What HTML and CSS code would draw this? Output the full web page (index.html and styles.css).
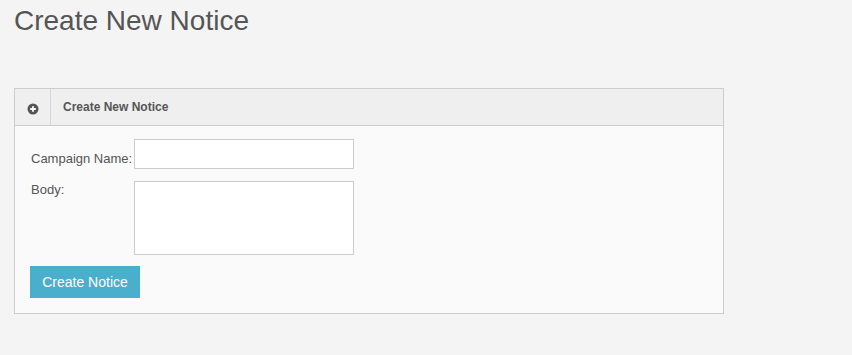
FILE: index.html
```html
<!DOCTYPE html>
<html lang="en">
<head>
  <meta charset="UTF-8" />
  <title>Create New Notice</title>
  <link rel="stylesheet" href="styles.css">
</head>
<body>
  <h1 class="page-title">Create New Notice</h1>

  <div class="widget">
    <div class="widget-head">
      <span class="widget-icon">
        <svg width="12" height="12" viewBox="0 0 12 12">
          <circle cx="6" cy="6" r="5.5" fill="#555"/>
          <path d="M6 3.2v5.6M3.2 6h5.6" stroke="#fff" stroke-width="1.8"/>
        </svg>
      </span>
      <h5 class="widget-title">Create New Notice</h5>
    </div>
    <form class="widget-body">
      <div class="row">
        <label for="campaign">Campaign Name:</label>
        <input type="text" id="campaign">
      </div>
      <div class="row">
        <label for="body">Body:</label>
        <textarea id="body"></textarea>
      </div>
      <button type="button" class="btn-info">Create Notice</button>
    </form>
  </div>
</body>
</html>
```

FILE: styles.css
```css
body {
  margin: 0;
  padding: 0 14px;
  font-family: "Liberation Sans", Arial, sans-serif;
  background-color: #f4f4f4;
  color: #555;
}

.page-title {
  margin: 0;
  padding-top: 5px;
  font-size: 28px;
  font-weight: normal;
  line-height: 32px;
  color: #555;
}

.widget {
  margin-top: 51px;
  width: 708px;
  border: 1px solid #cdcdcd;
  background-color: #fafafa;
}

.widget-head {
  display: flex;
  align-items: center;
  height: 36px;
  background-color: #efefef;
  border-bottom: 1px solid #cdcdcd;
}

.widget-icon {
  display: flex;
  align-items: center;
  justify-content: center;
  width: 36px;
  height: 36px;
  padding-top: 3px;
  box-sizing: border-box;
  border-right: 1px solid #d5d5d5;
}

.widget-title {
  margin: 0 0 0 12px;
  font-size: 12px;
  font-weight: bold;
  color: #555;
}

.widget-body {
  padding: 13px 15px 15px 15px;
  margin: 0;
}

.row {
  display: flex;
  align-items: flex-start;
  margin-bottom: 12px;
}

.row + .row {
  margin-bottom: 11px;
}

.row label {
  width: 104px;
  box-sizing: border-box;
  padding: 12px 0 0 1px;
  font-size: 13px;
  white-space: nowrap;
  color: #555;
}

.row + .row label {
  padding-top: 1px;
}

input, textarea {
  width: 220px;
  box-sizing: border-box;
  border: 1px solid #ccc;
  background: #fff;
  margin: 0;
  font-family: inherit;
}

input {
  height: 30px;
}

textarea {
  height: 74px;
  resize: none;
}

.btn-info {
  width: 110px;
  height: 32px;
  border: none;
  background-color: #49afcd;
  color: #fff;
  font-family: inherit;
  font-size: 14px;
  cursor: pointer;
}
```
